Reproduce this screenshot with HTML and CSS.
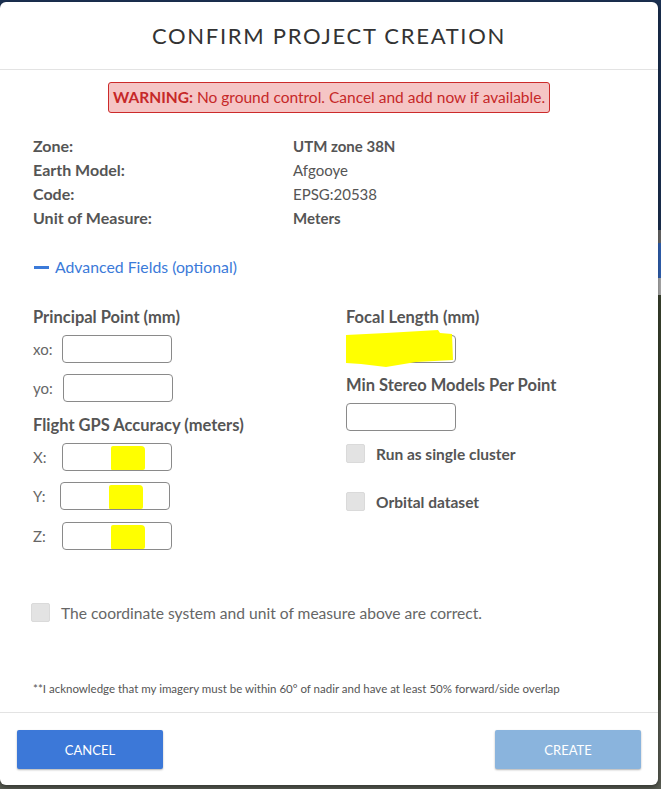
FILE: index.html
```html
<!DOCTYPE html>
<html lang="en">
  <head>
    <meta charset="UTF-8" />
    <meta name="viewport" content="width=device-width, initial-scale=1.0" />
    <title>Confirm Project Creation</title>
    <link rel="stylesheet" href="styles.css">
  </head>
  <body>
    <!-- Modal dialog over the map view -->
    <main class="modal">
      <header class="modal-header">
        <h1 class="modal-title">CONFIRM PROJECT CREATION</h1>
      </header>
      <section class="modal-body">
        <div class="warning-wrap">
          <div class="warning"><strong>WARNING:</strong> No ground control. Cancel and add now if available.</div>
        </div>
        <div class="info">
          <span class="info-label">Zone:</span><span class="info-value bold">UTM zone 38N</span>
          <span class="info-label">Earth Model:</span><span class="info-value">Afgooye</span>
          <span class="info-label">Code:</span><span class="info-value">EPSG:20538</span>
          <span class="info-label">Unit of Measure:</span><span class="info-value bold">Meters</span>
        </div>
        <div class="advanced-toggle"><span class="minus"></span>Advanced Fields (optional)</div>
        <div class="advanced">
          <div class="col">
            <div class="heading">Principal Point (mm)</div>
            <div class="field first">
              <label for="xo" class="field-label">xo:</label>
              <input type="text" id="xo" class="input" />
            </div>
            <div class="field">
              <label for="yo" class="field-label wide">yo:</label>
              <input type="text" id="yo" class="input" />
            </div>
            <div class="heading gps">Flight GPS Accuracy (meters)</div>
            <div class="field first">
              <label for="gx" class="field-label">X:</label>
              <div class="marked">
                <input type="text" id="gx" class="input" />
                <span class="marker small"></span>
              </div>
            </div>
            <div class="field">
              <label for="gy" class="field-label narrow">Y:</label>
              <div class="marked">
                <input type="text" id="gy" class="input" />
                <span class="marker small"></span>
              </div>
            </div>
            <div class="field last">
              <label for="gz" class="field-label">Z:</label>
              <div class="marked">
                <input type="text" id="gz" class="input" />
                <span class="marker small"></span>
              </div>
            </div>
          </div>
          <div class="col">
            <div class="heading">Focal Length (mm)</div>
            <div class="field first">
              <div class="marked">
                <input type="text" id="focal" class="input" />
                <svg class="marker-big" width="112" height="38" viewBox="0 0 112 38">
                  <path d="M0 5 L40 3 L92 0 L94 3 L106 4 L107 30 L70 32 L40 37 L15 34 L0 33 Z" fill="#ffff00" />
                </svg>
              </div>
            </div>
            <div class="heading stereo">Min Stereo Models Per Point</div>
            <div class="field first">
              <input type="text" id="stereo" class="input" />
            </div>
            <div class="check-row">
              <span class="check"></span><span class="check-label">Run as single cluster</span>
            </div>
            <div class="check-row orbital">
              <span class="check"></span><span class="check-label">Orbital dataset</span>
            </div>
          </div>
        </div>
        <div class="confirm">
          <span class="check"></span><span class="confirm-label">The coordinate system and unit of measure above are correct.</span>
        </div>
        <p class="footnote">**I acknowledge that my imagery must be within 60° of nadir and have at least 50% forward/side overlap</p>
      </section>
      <footer class="modal-footer">
        <button class="btn btn-cancel">CANCEL</button>
        <button class="btn btn-create">CREATE</button>
      </footer>
    </main>
  </body>
</html>
```

FILE: styles.css
```css
body {
  margin: 0;
  height: 789px;
  overflow: hidden;
  font-family: Lato, "Open Sans", sans-serif;
  color: #555;
  background: linear-gradient(
    to bottom,
    #1c3254 0,
    #1c3254 230px,
    #6d6d6d 230px,
    #6d6d6d 243px,
    #3366bb 243px,
    #3366bb 278px,
    #b5b5b5 278px,
    #b5b5b5 295px,
    #3c4530 295px,
    #3c4530 700px,
    #5b5f55 700px
  );
}
.modal {
  width: 658px;
  height: 783px;
  margin-top: 2px;
  background-color: #fff;
  border-radius: 6px;
  box-shadow: 0 2px 6px rgba(0, 0, 0, 0.5);
  display: flex;
  flex-flow: column nowrap;
}
.modal-header {
  height: 67px;
  border-bottom: 1px solid #e3e3e3;
  display: grid;
  place-content: center;
}
.modal-title {
  margin: 0;
  font-size: 22px;
  font-weight: 400;
  letter-spacing: 1.7px;
  color: #333;
}
.modal-body {
  flex: 1;
  padding: 12px 0 0 33px;
}
.warning-wrap {
  display: flex;
  justify-content: center;
  padding-right: 33px;
}
.warning {
  border: 1px solid #cc2a2a;
  border-radius: 3px;
  background-color: #f5c5c5;
  color: #c62828;
  font-size: 15.5px;
  height: 29px;
  line-height: 29px;
  padding: 0 4px;
}
.info {
  display: grid;
  grid-template-columns: 260px auto;
  margin-top: 21px;
  font-size: 15px;
  line-height: 24px;
}
.info-label {
  font-size: 16px;
  font-weight: 700;
}
.bold {
  font-weight: 700;
}
.advanced-toggle {
  margin-top: 25px;
  font-size: 15.8px;
  line-height: 24px;
  color: #3b7ad9;
  display: flex;
  align-items: center;
}
.minus {
  width: 15px;
  height: 3px;
  background-color: #3b7ad9;
  margin: 0 6px 0 1px;
}
.advanced {
  display: grid;
  grid-template-columns: 313px auto;
  margin-top: 26px;
}
.heading {
  font-size: 16.5px;
  font-weight: 700;
  line-height: 24px;
}
.heading.gps {
  margin-top: 11px;
}
.heading.stereo {
  margin-top: 10px;
}
.field {
  display: flex;
  align-items: center;
  margin-top: 11px;
  font-size: 15px;
  color: #666;
}
.field.first {
  margin-top: 6px;
}
.field.last {
  margin-top: 12px;
}
.field-label {
  width: 29px;
}
.field-label.wide {
  width: 30px;
}
.field-label.narrow {
  width: 27px;
}
.input {
  box-sizing: border-box;
  width: 110px;
  height: 28px;
  margin: 0;
  border: 1px solid #8a8a8a;
  border-radius: 4px;
  background-color: #fff;
}
.marked {
  position: relative;
  display: flex;
}
.marker {
  position: absolute;
  background-color: #ffff00;
}
.marker.small {
  left: 49px;
  top: 3px;
  width: 34px;
  height: 24px;
  border-radius: 2px 4px 2px 1px;
}
.marker-big {
  position: absolute;
  left: 0;
  top: -5px;
}
.check-row {
  display: flex;
  align-items: center;
  margin-top: 13px;
  font-size: 15.5px;
  font-weight: 700;
}
.check-row.orbital {
  margin-top: 29px;
}
.check {
  box-sizing: border-box;
  width: 19px;
  height: 19px;
  border: 1px solid #dadada;
  border-radius: 2px;
  background-color: #e3e3e3;
  margin-right: 11px;
}
.confirm {
  display: flex;
  align-items: center;
  margin: 53px 0 0 -2px;
  font-size: 15.6px;
  color: #666;
}
.footnote {
  margin: 60px 0 0;
  font-size: 11.5px;
  color: #555;
}
.modal-footer {
  height: 73px;
  border-top: 1px solid #e3e3e3;
  display: flex;
  justify-content: space-between;
  align-items: flex-start;
  padding: 17px 17px 0;
  box-sizing: border-box;
}
.btn {
  width: 146px;
  height: 39px;
  border: none;
  border-radius: 2px;
  color: #fff;
  font-family: Lato, "Open Sans", sans-serif;
  font-size: 13px;
  box-shadow: 0 1px 2px rgba(0, 0, 0, 0.3);
}
.btn-cancel {
  background-color: #3c78d8;
}
.btn-create {
  background-color: #8ab4dd;
}
```
